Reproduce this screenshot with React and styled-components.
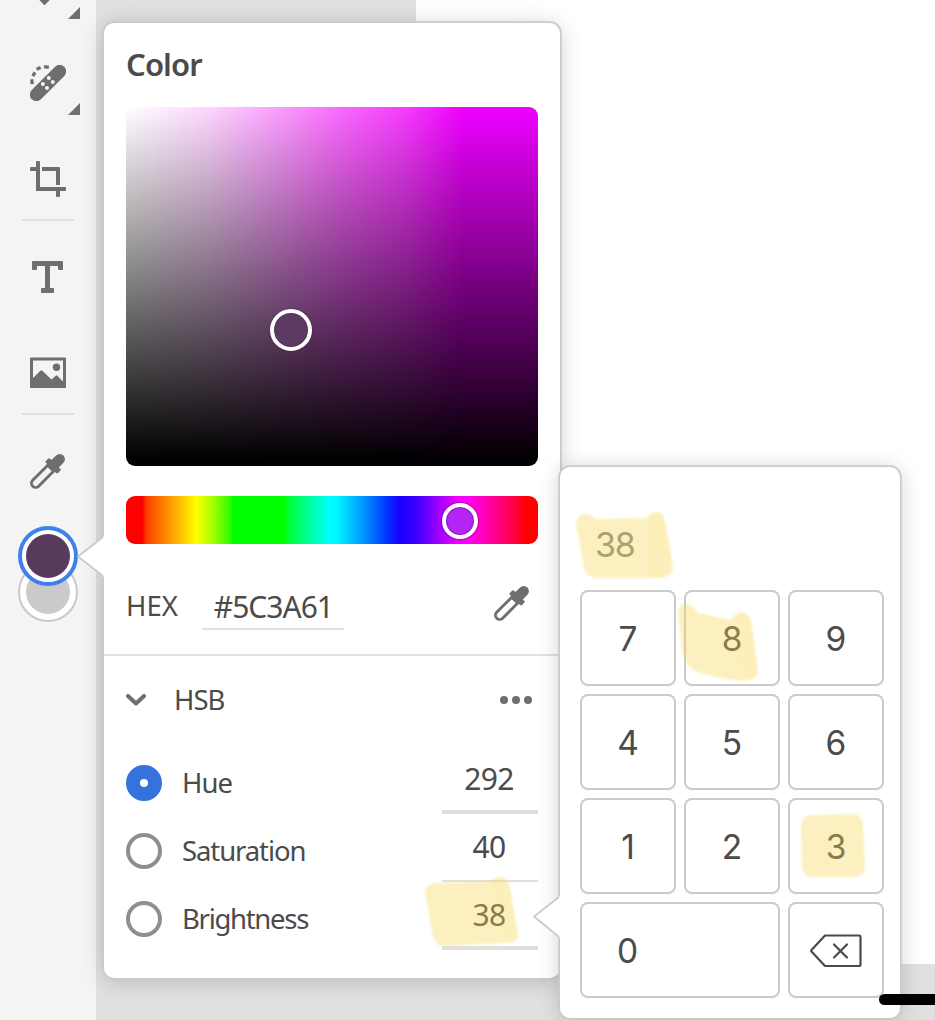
import React from "react";
import styled, { createGlobalStyle } from "styled-components";

const Global = createGlobalStyle`
  *, *::before, *::after { box-sizing: border-box; }
  body { margin: 0; background: #fff; font-family: "Noto Sans", "Open Sans", sans-serif; color: #4b4b4b; }
  svg { display: block; }
`;

const Screen = styled.div`
  position: relative;
  width: 935px;
  height: 1020px;
  overflow: hidden;
  display: flex;
  background: #e0e0e0;
`;

const Toolbar = styled.nav`
  width: 96px;
  height: 100%;
  background: #f4f4f4;
  display: flex;
  flex-direction: column;
  align-items: center;
`;

const Tool = styled.div`
  position: relative;
  flex: none;
  width: 36px;
  height: 36px;
  margin-top: ${(p) => p.$gap}px;
`;

const Flyout = styled.svg`
  position: absolute;
  left: 38px;
  top: 38px;
`;

const ToolDivider = styled.div`
  flex: none;
  width: 52px;
  height: 2px;
  margin-top: 22px;
  background: #e0e0e0;
`;

const Swatches = styled.div`
  position: relative;
  width: 60px;
  height: 96px;
  margin-top: 37px;
`;

const Swatch = styled.div`
  position: absolute;
  top: ${(p) => p.$top}px;
  left: 0;
  width: 60px;
  height: 60px;
  border-radius: 50%;
  border: ${(p) => p.$ring};
  background: #fff;
  display: grid;
  place-items: center;
  &::after {
    content: "";
    width: 44px;
    height: 44px;
    border-radius: 50%;
    background: ${(p) => p.$color};
  }
`;

const Workspace = styled.main`
  flex: 1;
  height: 100%;
  padding: 0 0 56px 320px;
`;

const Canvas = styled.div`
  height: 100%;
  background: #fff;
`;

const Popover = styled.section`
  position: absolute;
  left: ${(p) => p.$x}px;
  top: ${(p) => p.$y}px;
  width: ${(p) => p.$w}px;
  height: ${(p) => p.$h}px;
  border-radius: 10px;
  background: #fff;
  box-shadow: 0 0 0 1.7px #cacaca, 0 2px 22px rgba(0, 0, 0, 0.2);
`;

const Tail = styled.svg`
  position: absolute;
  left: -28px;
  top: ${(p) => p.$top}px;
`;

const Head = styled.header`
  height: 84px;
  padding: 0 22px;
  line-height: 83px;
  font-size: 31px;
  font-weight: 600;
  letter-spacing: -0.9px;
`;

const Field = styled.div`
  position: relative;
  height: 359px;
  margin: 0 22px;
  border-radius: 9px;
  background:
    linear-gradient(to bottom, rgba(0, 0, 0, 0), #000 98.5%),
    linear-gradient(to right, #fff 0%, #fdd6fe 20%, #fb9aff 38%, #fa66ff 53%, #f63aff 68%, #f218ff 76%, #ee00ff 82%, #ee00ff 100%);
`;

const HueBar = styled.div`
  position: relative;
  height: 48px;
  margin: 30px 22px 0;
  border-radius: 9px;
  background: linear-gradient(to right,
    #f00 0%, #f00 4%, #ff4000 5%, #ff8c00 10%, #ff0 17%, #9f0 21.5%, #37ff00 25%, #0f0 26%,
    #0f0 38.5%, #00ff38 39.5%, #00ff80 43%, #0ff 49.5%, #00f8ff 51%, #0090ff 58%, #0030ff 63.5%,
    #1800ff 66.5%, #3a00ff 70.5%, #a000ff 76%, #e800ff 80%, #ff00f8 83%, #ff00a8 88%,
    #ff0040 94.5%, #f00 97%, #f00 100%);
`;

const Handle = styled.div`
  position: absolute;
  left: ${(p) => p.$x}px;
  top: ${(p) => p.$y}px;
  width: ${(p) => p.$size}px;
  height: ${(p) => p.$size}px;
  border-radius: 50%;
  border: 4px solid #fff;
  background: ${(p) => p.$color};
  box-shadow: 0 0 1px 1px rgba(0, 0, 0, ${(p) => p.$edge}), inset 0 0 1px 1px rgba(0, 0, 0, ${(p) => p.$edge});
`;

const HexRow = styled.div`
  height: 112px;
  padding: 36px 30px 0 22px;
  display: flex;
  align-items: flex-start;
  border-bottom: 2px solid #e1e1e1;
`;

const Label = styled.span`
  font-size: 27.5px;
  line-height: ${(p) => p.$leading || 50}px;
  letter-spacing: ${(p) => p.$tracking || 0}px;
`;

const HexValue = styled.div`
  width: 142px;
  height: 50px;
  margin: 0 auto 0 24px;
  padding-left: 12px;
  font-size: 30px;
  line-height: 54px;
  letter-spacing: -1px;
  border-bottom: 2px solid #e1e1e1;
`;

const DropperSlot = styled.div`
  width: 36px;
  height: 36px;
  margin-top: 5px;
`;

const SectionHead = styled.div`
  height: 93px;
  padding: 0 28px 5px 22px;
  display: flex;
  align-items: center;
  gap: 28px;
`;

const Dots = styled.div`
  margin-left: auto;
  display: flex;
  gap: 4px;
  i { width: 8px; height: 8px; border-radius: 50%; background: #6e6e6e; }
`;

const Channel = styled.label`
  height: 68px;
  padding: 0 22px;
  display: flex;
  align-items: center;
  gap: 20px;
`;

const Radio = styled.span`
  width: 36px;
  height: 36px;
  border-radius: 50%;
  background: #fff;
  border: ${(p) => (p.$on ? "14px solid #3572de" : "4px solid #8e8e8e")};
`;

const Amount = styled.span`
  align-self: flex-start;
  width: 96px;
  height: 65px;
  margin-left: auto;
  padding-right: 2px;
  line-height: 59px;
  font-size: 30px;
  letter-spacing: -0.7px;
  text-align: center;
  border-bottom: ${(p) => (p.$thin ? 2 : 4)}px solid #e0e0e0;
`;

const KeypadBody = styled.div`
  padding: 30px 16px 20px 20px;
  font-family: Inter, Roboto, sans-serif;
`;

const Readout = styled.div`
  height: 93px;
  padding-left: 15px;
  line-height: 95px;
  font-size: 34px;
  letter-spacing: -1.3px;
  color: #858585;
`;

const Keys = styled.div`
  display: grid;
  grid-template-columns: repeat(3, 96px);
  grid-auto-rows: 96px;
  gap: 8px;
`;

const Key = styled.button`
  grid-column: span ${(p) => p.$span || 1};
  padding: 2px 0 0 ${(p) => (p.$span ? 35 : 0)}px;
  display: flex;
  align-items: center;
  justify-content: ${(p) => (p.$span ? "flex-start" : "center")};
  border: 2px solid #cacaca;
  border-radius: 8px;
  background: #fff;
  color: #4b4b4b;
  font: 400 33.5px Inter, Roboto, sans-serif;
`;

const Marks = styled.svg`
  position: absolute;
  left: 0;
  top: 0;
  pointer-events: none;
`;

const HomeIndicator = styled.div`
  position: absolute;
  left: 879px;
  top: 994px;
  width: 80px;
  height: 11px;
  border-radius: 6px;
  background: #000;
`;

const Corner = () => (
  <Flyout width="12" height="12"><path d="M12 0V12H0Z" fill="#6e6e6e" /></Flyout>
);

const Dropper = () => (
  <svg width="36" height="36" viewBox="0 0 36 36">
    <g transform="translate(17.7 18.2) rotate(45)">
      <path d="M-4.2 -5V16a4.2 4.2 0 0 0 8.4 0V-5" transform="translate(0 1)" fill="none" stroke="#6e6e6e" strokeWidth="2.9" />
      <path d="M-5.2 -17a5.2 5.2 0 0 1 10.4 0V-10.5H7.2a1.4 1.4 0 0 1 1.4 1.4V-6a1.4 1.4 0 0 1-1.4 1.4H5.5V-2.8H-5.5V-4.6H-7.2A1.4 1.4 0 0 1-8.6-6V-9.1a1.4 1.4 0 0 1 1.4-1.4H-5.2Z" fill="#6e6e6e" />
    </g>
  </svg>
);

const Bandage = () => (
  <svg width="36" height="36" viewBox="0 0 36 36">
    <path d="M2.3 19.1L1.7 14.3M2.8 11.2L5 7.4M6.6 4.3L10.7 2.4M14 1.6L18.8 2.4" fill="none" stroke="#6e6e6e" strokeWidth="3.3" />
    <rect x="-5" y="11.5" width="46" height="13" rx="6.5" transform="rotate(-45 18 18)" fill="#6e6e6e" />
    <g fill="#f4f4f4"><circle cx="18.8" cy="12.9" r="2" /><circle cx="22.8" cy="17" r="2" /><circle cx="12.9" cy="19" r="2" /><circle cx="17" cy="23" r="2" /></g>
  </svg>
);

const Crop = () => (
  <svg width="36" height="36" viewBox="0 0 36 36" fill="#6e6e6e">
    <path d="M7 0h2q1 0 1 1V26H35q1 0 1 1v2q0 1-1 1H30v5q0 1-1 1H27q-1 0-1-1V30H6V10H1Q0 10 0 9V7Q0 6 1 6H6V1Q6 0 7 0Z" />
    <path d="M12 6H29q1 0 1 1V24H26V10H12Z" />
  </svg>
);

const TypeTool = () => (
  <svg width="36" height="36" viewBox="0 0 36 36" fill="#6e6e6e">
    <path d="M3 2H32q1 0 1 1V10q0 1-1 1H29q-1 0-1-1V7H20V29H23q1 0 1 1v3q0 1-1 1H12q-1 0-1-1V30q0-1 1-1H15V7H7v3q0 1-1 1H3Q2 11 2 10V3Q2 2 3 2Z" />
  </svg>
);

const Picture = () => (
  <svg width="36" height="36" viewBox="0 0 36 36" fill="#6e6e6e">
    <path fillRule="evenodd" d="M1 2.500H35q1 0 1 1V32q0 1-1 1H1q-1 0-1-1V3.500q0-1 1-1ZM3 5.500V23L10.400 15.700q1-1 2 0L21.500 24.500L25.700 20.700q.8-.8 1.600 0L33 26.500V5.500Z" />
    <circle cx="26.500" cy="12.200" r="3.700" />
  </svg>
);

const highlights = [
  ["M425 892Q425 884 436 883L491 881Q494 877 502 877Q508 878 510 887L518 935Q518 942 507 943L444 946Q436 946 433 937Z", "M491 881Q494 877 502 877Q508 878 510 887L518 935Q518 940 509 942Q500 930 495 905Z"],
  ["M576 524Q577 514 585 514Q591 514 596 519L647 518Q650 512 657 512Q663 513 665 521L673 567Q673 574 663 578H596Q587 577 584 568Z", "M647 518Q650 512 657 512Q663 513 665 521L673 567Q672 574 663 577H650Z"],
  ["M678 613Q679 604 686 604Q694 606 698 613L731 620Q736 612 743 612Q751 616 752 626L758 672Q756 680 745 681Q710 678 693 670Q684 664 682 649Z", "M731 620Q736 612 743 612Q751 616 752 626L758 672Q756 680 745 680Q735 655 731 620Z"],
  ["M801 829Q801 816 811 815L853 814Q862 815 863 824L865 868Q864 877 853 877L811 877Q803 877 802 865Z"],
];

const channels = [
  { name: "Hue", value: 292, on: true, tracking: -0.9 },
  { name: "Saturation", value: 40, thin: true, tracking: -1.1 },
  { name: "Brightness", value: 38, tracking: -1.3 },
];

export default function App() {
  return (
    <Screen>
      <Global />
      <Toolbar>
        <Tool $gap={-31}>
          <svg width="36" height="36" viewBox="0 0 36 36"><path d="M8.500 30L13.300 35.300Q14.500 36.500 15.700 35.300L20.500 30Z" fill="#6e6e6e" /></svg>
          <Corner />
        </Tool>
        <Tool $gap={60}><Bandage /><Corner /></Tool>
        <Tool $gap={60}><Crop /></Tool>
        <ToolDivider />
        <Tool $gap={38}><TypeTool /></Tool>
        <Tool $gap={60}><Picture /></Tool>
        <ToolDivider />
        <Tool $gap={38}><Dropper /></Tool>
        <Swatches>
          <Swatch $top={36} $color="#cacaca" $ring="2px solid #cacaca" />
          <Swatch $top={0} $color="#573a5c" $ring="4px solid #4080e8" />
        </Swatches>
      </Toolbar>
      <Workspace><Canvas /></Workspace>

      <Popover $x={104} $y={23} $w={456} $h={955}>
        <Tail $top={513} width="28" height="41" viewBox="0 0 28 41">
          <path d="M28 0L2 20.500L28 41Z" fill="#fff" />
          <path d="M27 1L2 20.500L27 40" fill="none" stroke="#cacaca" strokeWidth="1.700" />
        </Tail>
        <Head>Color</Head>
        <Field><Handle $x={144} $y={202} $size={42} $color="#5c3a61" $edge={0.1} /></Field>
        <HueBar><Handle $x={316} $y={6.5} $size={36} $color="#b424f5" $edge={0.25} /></HueBar>
        <HexRow>
          <Label $leading={52}>HEX</Label>
          <HexValue>#5C3A61</HexValue>
          <DropperSlot><Dropper /></DropperSlot>
        </HexRow>
        <SectionHead>
          <svg width="20" height="12" viewBox="0 0 20 12"><path d="M2 2L10 9.500L18 2" fill="none" stroke="#6e6e6e" strokeWidth="4" strokeLinecap="round" strokeLinejoin="round" /></svg>
          <Label $tracking={-1}>HSB</Label>
          <Dots><i /><i /><i /></Dots>
        </SectionHead>
        {channels.map((c) => (
          <Channel key={c.name}>
            <Radio $on={c.on} />
            <Label $tracking={c.tracking}>{c.name}</Label>
            <Amount $thin={c.thin}>{c.value}</Amount>
          </Channel>
        ))}
      </Popover>

      <Popover $x={560} $y={467} $w={340} $h={551}>
        <Tail $top={428.5} width="28" height="42" viewBox="0 0 28 42">
          <path d="M28 0L2 20.500L28 42Z" fill="#fff" />
          <path d="M27 1L2 20.500L27 41" fill="none" stroke="#cacaca" strokeWidth="1.700" />
        </Tail>
        <KeypadBody>
          <Readout>38</Readout>
          <Keys>
            {[7, 8, 9, 4, 5, 6, 1, 2, 3].map((n) => <Key key={n}>{n}</Key>)}
            <Key $span={2}>0</Key>
            <Key aria-label="Backspace">
              <svg width="52" height="34" viewBox="0 0 52 34" fill="none" stroke="#4b4b4b" strokeWidth="2.200" strokeLinecap="round" strokeLinejoin="round">
                <path d="M15 1.500H49q1.500 0 1.500 1.500V30.500q0 1.500-1.500 1.500H15L1.500 17.500q-.6-.8 0-1.500Z" />
                <path d="M24 10.500L37 23.500M37 10.500L24 23.500" />
              </svg>
            </Key>
          </Keys>
        </KeypadBody>
      </Popover>

      <Marks width="935" height="1020" viewBox="0 0 935 1020">
        <defs><filter id="soft"><feGaussianBlur stdDeviation="1" /></filter></defs>
        {highlights.map(([base, overlap]) => (
          <g key={base} filter="url(#soft)" fill="#f7d349">
            <path d={base} opacity="0.35" />
            {overlap && <path d={overlap} opacity="0.05" />}
          </g>
        ))}
      </Marks>
      <HomeIndicator />
    </Screen>
  );
}
